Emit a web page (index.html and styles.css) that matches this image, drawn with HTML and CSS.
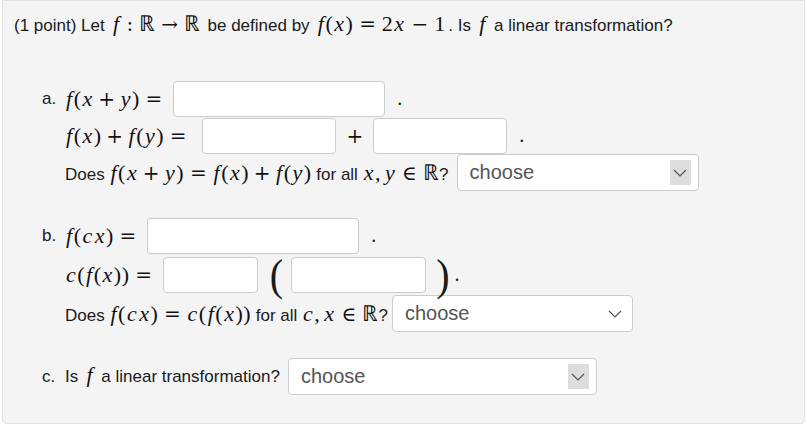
FILE: index.html
```html
<!DOCTYPE html>
<html>
<head>
<meta charset="utf-8">
<link rel="stylesheet" href="styles.css">
</head>
<body>
<div class="problem">
  <p class="title">(1 point) Let <span class="m inline"><i>f</i><span class="rel">:</span>ℝ<span class="rel">→</span>ℝ</span> be defined by <span class="m inline"><i>f</i>(<i>x</i>)<span class="rel">=</span>2<i>x</i><span class="op">−</span>1</span>. Is <span class="m inline"><i>f</i></span> a linear transformation?</p>

  <div class="part part-a">
    <div class="label">a.</div>
    <div class="lines">
      <div class="row">
        <span class="m"><i>f</i>(<i>x</i><span class="op">+</span><i>y</i>)<span class="rel">=</span></span>
        <span class="field w212 near"></span>
        <span class="dot">.</span>
      </div>
      <div class="row">
        <span class="m"><i>f</i>(<i>x</i>)<span class="op">+</span><i>f</i>(<i>y</i>)<span class="rel">=</span></span>
        <span class="field w134"></span>
        <span class="m"><span class="op plus">+</span></span>
        <span class="field w134 nogap"></span>
        <span class="dot">.</span>
      </div>
      <div class="row">
        <span class="run">Does <span class="m"><i>f</i>(<i>x</i><span class="op">+</span><i>y</i>)<span class="rel">=</span><i>f</i>(<i>x</i>)<span class="op">+</span><i>f</i>(<i>y</i>)</span> for all <span class="m"><i>x</i>,<span class="thin"></span><i>y</i><span class="rel">∈</span>ℝ</span>?</span>
        <div class="choice w242 shaded">
          <span class="choice-text">choose</span>
          <span class="arrow"><svg width="14" height="8" viewBox="0 0 14 8"><path d="M1 1 L7 7 L13 1" fill="none" stroke="#555" stroke-width="1.2"/></svg></span>
        </div>
      </div>
    </div>
  </div>

  <div class="part part-b">
    <div class="label">b.</div>
    <div class="lines">
      <div class="row">
        <span class="m"><i>f</i>(<i>c</i><i>x</i>)<span class="rel">=</span></span>
        <span class="field w212 near"></span>
        <span class="dot">.</span>
      </div>
      <div class="row tall">
        <span class="m"><i>c</i>(<i>f</i>(<i>x</i>))<span class="rel">=</span></span>
        <span class="field w95 near"></span>
        <span class="bigparen open">(</span>
        <span class="field w135 nogap"></span>
        <span class="bigparen close">)</span><span class="dot tight">.</span>
      </div>
      <div class="row">
        <span class="run">Does <span class="m"><i>f</i>(<i>c</i><i>x</i>)<span class="rel">=</span><i>c</i>(<i>f</i>(<i>x</i>))</span> for all <span class="m"><i>c</i>,<span class="thin"></span><i>x</i><span class="rel">∈</span>ℝ</span>?</span>
        <div class="choice w241 left4">
          <span class="choice-text">choose</span>
          <span class="arrow"><svg width="14" height="8" viewBox="0 0 14 8"><path d="M1 1 L7 7 L13 1" fill="none" stroke="#555" stroke-width="1.2"/></svg></span>
        </div>
      </div>
    </div>
  </div>

  <div class="part part-c">
    <div class="label">c.</div>
    <div class="lines">
      <div class="row">
        <span class="run">Is <span class="m inline"><i>f</i></span> a linear transformation?</span>
        <div class="choice w309 shaded">
          <span class="choice-text">choose</span>
          <span class="arrow"><svg width="14" height="8" viewBox="0 0 14 8"><path d="M1 1 L7 7 L13 1" fill="none" stroke="#555" stroke-width="1.2"/></svg></span>
        </div>
      </div>
    </div>
  </div>
</div>
</body>
</html>
```

FILE: styles.css
```css
html, body {
  margin: 0;
  padding: 0;
  background: #ffffff;
}

body {
  font-family: "Liberation Sans", Arial, sans-serif;
  font-size: 17px;
  color: #1a1a1a;
}

.problem {
  margin: 0 2px;
  height: 424px;
  box-sizing: border-box;
  border: 1px solid #e2e2e2;
  border-radius: 0 0 4px 4px;
  background: #f4f4f4;
  padding: 0 0 0 11px;
}

.title {
  margin: 0;
  padding-top: 13px;
  line-height: 20px;
  white-space: nowrap;
}

.m {
  font-family: "Liberation Serif", "Times New Roman", serif;
  font-size: 22px;
  letter-spacing: 0.5px;
  white-space: nowrap;
  color: #111;
}

.m.inline {
  margin: 0 2.5px;
}

.m i {
  font-style: italic;
  margin: 0 1px;
}

.op, .rel {
  font-family: "DejaVu Serif", "Liberation Serif", serif;
  font-size: 20px;
  letter-spacing: 0;
}

.op {
  margin: 0 4.6px;
}

.rel {
  margin: 0 5.8px;
}

.title .op {
  margin: 0 6px;
}

.op.plus {
  margin: 0 10px;
}

.thin {
  display: inline-block;
  width: 3px;
}

.part {
  display: grid;
  grid-template-columns: 23px auto;
  margin-left: 28px;
}

.part-a {
  margin-top: 44px;
}

.part-b, .part-c {
  margin-top: 26px;
}

.label {
  height: 37px;
  display: flex;
  align-items: center;
}

.lines {
  display: flex;
  flex-direction: column;
}

.row {
  display: flex;
  align-items: center;
  height: 37px;
  white-space: nowrap;
}

.row.tall {
  height: 41px;
}

.run {
  white-space: nowrap;
  padding-bottom: 3px;
}

.field {
  display: inline-block;
  height: 36px;
  box-sizing: border-box;
  background: #ffffff;
  border: 1px solid #cccccc;
  border-radius: 4px;
  margin-left: 10px;
}

.field.near {
  margin-left: 5px;
}

.field.nogap {
  margin-left: 0;
}

.w212 { width: 212px; }
.w134 { width: 134px; }
.w95 { width: 95px; }
.w135 { width: 135px; }

.dot {
  margin-left: 12px;
  font-size: 20px;
  font-family: "Liberation Serif", serif;
}

.dot.tight {
  margin-left: 5px;
}

.bigparen {
  font-family: "Liberation Serif", serif;
  font-size: 40px;
  line-height: 41px;
  transform: scaleY(1.12);
}

.bigparen.open {
  margin: 0 8px 0 12px;
}

.bigparen.close {
  margin-left: 10px;
}

.choice {
  display: flex;
  align-items: center;
  height: 37px;
  box-sizing: border-box;
  background: #ffffff;
  border: 1px solid #cccccc;
  border-radius: 4px;
  margin-left: 8px;
  padding-left: 12px;
}

.choice.left4 {
  margin-left: 4px;
}

.w242 { width: 242px; }
.w241 { width: 241px; }
.w309 { width: 309px; }

.choice-text {
  font-family: "Liberation Sans", Arial, sans-serif;
  font-size: 20px;
  color: #555555;
  flex: 1;
}

.arrow {
  width: 21px;
  height: 25px;
  margin-right: 7px;
  display: flex;
  align-items: center;
  justify-content: center;
}

.choice.shaded .arrow {
  background: #dddddd;
}
```
